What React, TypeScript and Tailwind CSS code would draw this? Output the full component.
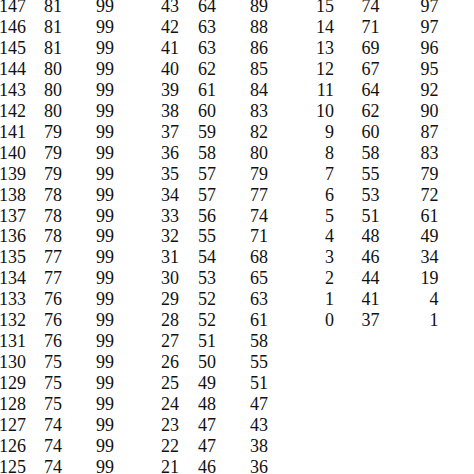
import React from "react";

const c1 = Array.from({ length: 23 }, (_, i) => 147 - i);
const c2 = [81, 81, 81, 80, 80, 80, 79, 79, 79, 78, 78, 78, 77, 77, 76, 76, 76, 75, 75, 75, 74, 74, 74];
const c4 = Array.from({ length: 23 }, (_, i) => 43 - i);
const c5 = [64, 63, 63, 62, 61, 60, 59, 58, 57, 57, 56, 55, 54, 53, 52, 52, 51, 50, 49, 48, 47, 47, 46];
const c6 = [89, 88, 86, 85, 84, 83, 82, 80, 79, 77, 74, 71, 68, 65, 63, 61, 58, 55, 51, 47, 43, 38, 36];
const c7 = Array.from({ length: 16 }, (_, i) => 15 - i);
const c8 = [74, 71, 69, 67, 64, 62, 60, 58, 55, 53, 51, 48, 46, 44, 41, 37];
const c9 = [97, 97, 96, 95, 92, 90, 87, 83, 79, 72, 61, 49, 34, 19, 4, 1];

export default function App() {
  return (
    <div className="w-[474px] h-[474px] overflow-hidden bg-white">
      <div
        className="ml-[-1px] mt-[-4px] grid grid-cols-[45px_52px_65px_37px_52px_52px_32px_45.5px_59px] text-[18px] leading-[20.95px] text-[#111]"
        style={{ fontFamily: '"Liberation Serif", "Times New Roman", serif' }}
      >
        {c1.map((v, i) => (
          <React.Fragment key={i}>
            <div>{v}</div>
            <div>{c2[i]}</div>
            <div>99</div>
            <div>{c4[i]}</div>
            <div>{c5[i]}</div>
            <div>{c6[i]}</div>
            <div className="text-right">{i < c7.length ? c7[i] : ""}</div>
            <div className="text-right">{i < c8.length ? c8[i] : ""}</div>
            <div className="text-right">{i < c9.length ? c9[i] : ""}</div>
          </React.Fragment>
        ))}
      </div>
    </div>
  );
}
